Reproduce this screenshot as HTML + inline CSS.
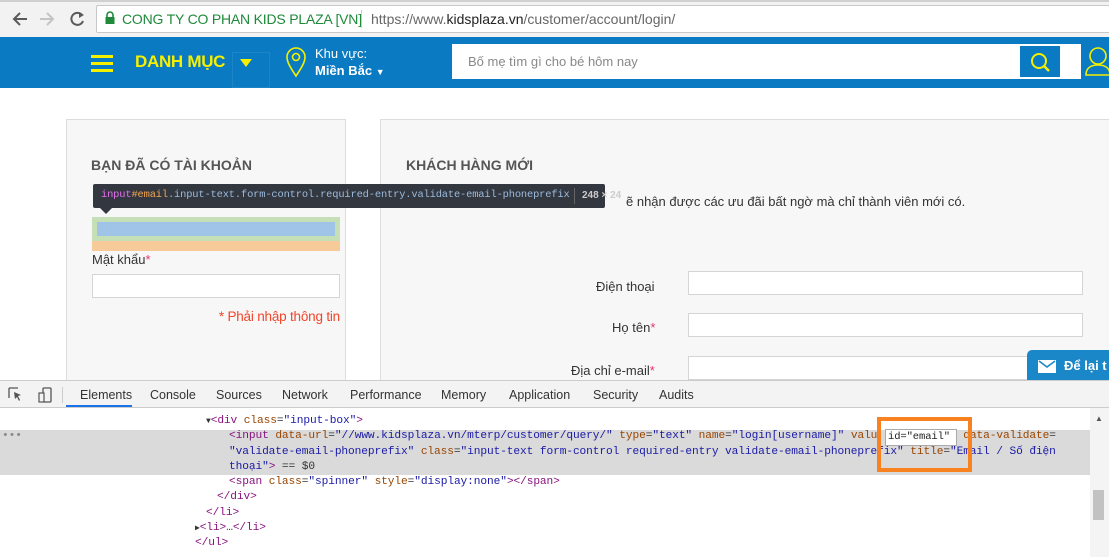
<!DOCTYPE html>
<html><head><meta charset="utf-8"><style>
*{margin:0;padding:0;box-sizing:border-box}
body{width:1109px;height:557px;overflow:hidden;position:relative;background:#fff;font-family:"Liberation Sans",Arial,sans-serif;font-size:13px;color:#333}
.a{position:absolute}
.mono{font-family:"Liberation Mono","DejaVu Sans Mono",monospace;font-size:11.2px;letter-spacing:-0.1px}
.code div{white-space:pre;height:15.3px}
.tg{color:#881280}.at{color:#994500}.av{color:#1a1aa6}
</style></head><body>
<!-- browser bar -->
<div class="a" style="left:0;top:0;width:1109px;height:37px;background:#f2f2f2;border-top:2px solid #d0d0d0"></div>
<svg class="a" style="left:10px;top:10px" width="80" height="18">
<path d="M17 9H4M10 3L4 9l6 6" stroke="#5a5a5a" stroke-width="2" fill="none"/>
<path d="M30 9h13M37 3l6 6-6 6" stroke="#c4c4c4" stroke-width="2" fill="none"/>
<path d="M72 5a6 6 0 1 0 1 6" stroke="#5a5a5a" stroke-width="2" fill="none"/><path d="M69 2l5 3-5 3z" fill="#5a5a5a"/>
</svg>
<div class="a" style="left:96px;top:5px;width:1020px;height:28px;background:#fff;border:1px solid #c8c8c8;border-radius:2px"></div>
<svg class="a" style="left:105px;top:11px" width="10" height="13"><path d="M2 6V4a3 3 0 0 1 6 0v2" stroke="#1e8a3a" stroke-width="1.6" fill="none"/><rect x="0.5" y="6" width="9" height="7" fill="#1e8a3a"/></svg>
<div class="a" style="left:122px;top:11px;font-size:14px;color:#1e8a3a;letter-spacing:-0.2px">CONG TY CO PHAN KIDS PLAZA [VN]</div>
<div class="a" style="left:361px;top:10px;width:1px;height:18px;background:#ccc"></div>
<div class="a" style="left:371px;top:11px;font-size:14px;color:#666">https://www.<span style="color:#222">kidsplaza.vn</span>/customer/account/login/</div>
<!-- blue header -->
<div class="a" style="left:0;top:37px;width:1109px;height:51px;background:#0a7ac2"></div>
<div class="a" style="left:91px;top:55px;width:22px;height:3px;background:#f5f000;box-shadow:0 7px 0 #f5f000,0 14px 0 #f5f000"></div>
<div class="a" style="left:135px;top:52px;font-size:17px;font-weight:bold;color:#f5f000;letter-spacing:-0.3px">DANH MỤC</div>
<div class="a" style="left:232px;top:52px;width:38px;height:36px;border:1px solid rgba(255,255,255,.08)"></div>
<svg class="a" style="left:240px;top:59px" width="12" height="8"><path d="M0 0h12L6 8z" fill="#f5f000"/></svg>
<svg class="a" style="left:285px;top:46px" width="22" height="32"><path d="M11 30C5 21 2 16 2 11a9 9 0 0 1 18 0c0 5-3 10-9 19z" stroke="#f5f000" stroke-width="1.6" fill="none"/><circle cx="11" cy="11" r="3.5" stroke="#f5f000" stroke-width="1.6" fill="none"/></svg>
<div class="a" style="left:315px;top:46px;font-size:13px;color:#fff">Khu vực:</div>
<div class="a" style="left:315px;top:63px;font-size:13px;font-weight:bold;color:#fff">Miền Bắc <span style="font-size:9px">▼</span></div>
<div class="a" style="left:452px;top:44px;width:629px;height:35px;background:#fff"></div>
<div class="a" style="left:468px;top:54px;font-size:13px;color:#888">Bố mẹ tìm gì cho bé hôm nay</div>
<div class="a" style="left:1020px;top:46px;width:40px;height:31px;background:#0a7ac2"></div>
<svg class="a" style="left:1029px;top:51px" width="24" height="22"><circle cx="10" cy="10" r="7" stroke="#f5f000" stroke-width="2" fill="none"/><path d="M15 15l5 5" stroke="#f5f000" stroke-width="2.5"/></svg>
<svg class="a" style="left:1085px;top:45px" width="24" height="32"><circle cx="13" cy="11" r="8" stroke="#f5f000" stroke-width="1.6" fill="none"/><path d="M1 30c0-7 5-10 12-10s12 3 12 10z" stroke="#f5f000" stroke-width="1.6" fill="none"/></svg>
<!-- page -->
<div class="a" style="left:66px;top:119px;width:280px;height:270px;background:#f7f7f7;border:1px solid #ddd"></div>
<div class="a" style="left:380px;top:119px;width:740px;height:270px;background:#f7f7f7;border:1px solid #ddd"></div>
<div class="a" style="left:91px;top:157px;font-size:14px;font-weight:bold;color:#555">BẠN ĐÃ CÓ TÀI KHOẢN</div>
<div class="a" style="left:406px;top:157px;font-size:14px;font-weight:bold;color:#555">KHÁCH HÀNG MỚI</div>
<div class="a" style="left:626px;top:194px;font-size:13px;color:#333">ẽ nhận được các ưu đãi bất ngờ mà chỉ thành viên mới có.</div>
<div class="a" style="left:92px;top:217px;width:248px;height:34px;background:#f6ca99"></div>
<div class="a" style="left:92px;top:217px;width:248px;height:24px;background:#c5dfb6"></div>
<div class="a" style="left:97px;top:222px;width:238px;height:14px;background:#9fc4e7"></div>
<div class="a" style="left:92px;top:252px;font-size:13px;color:#333">Mật khẩu<span style="color:#e8336d">*</span></div>
<div class="a" style="left:92px;top:274px;width:248px;height:24px;background:#fff;border:1px solid #d5d5d5"></div>
<div class="a" style="left:140px;width:200px;text-align:right;top:309px;font-size:13.5px;color:#f0462a;letter-spacing:-0.2px">* Phải nhập thông tin</div>
<div class="a" style="left:596px;top:279px;font-size:13px">Điện thoại</div>
<div class="a" style="left:612px;top:320px;font-size:13px">Họ tên<span style="color:#e8336d">*</span></div>
<div class="a" style="left:571px;top:363px;font-size:13px">Địa chỉ e-mail<span style="color:#e8336d">*</span></div>
<div class="a" style="left:688px;top:271px;width:395px;height:24px;background:#fff;border:1px solid #d5d5d5"></div>
<div class="a" style="left:688px;top:313px;width:395px;height:24px;background:#fff;border:1px solid #d5d5d5"></div>
<div class="a" style="left:688px;top:356px;width:395px;height:24px;background:#fff;border:1px solid #d5d5d5"></div>
<div class="a" style="left:1027px;top:350px;width:90px;height:32px;background:#1a87c9;border-radius:5px 0 0 0"></div>
<svg class="a" style="left:1038px;top:360px" width="18" height="13"><rect width="18" height="13" fill="#fff"/><path d="M1 1l8 6 8-6" stroke="#1a87c9" stroke-width="1.5" fill="none"/></svg>
<div class="a" style="left:1064px;top:358px;font-size:13px;font-weight:bold;color:#fff">Để lại t</div>
<!-- tooltip -->
<div class="a" style="left:93px;top:184px;width:512px;height:24px;background:#333740;border-radius:2px"></div>
<div class="a mono" style="left:101px;top:189px;font-size:10.4px;letter-spacing:-0.15px;white-space:pre;color:#9bbbdc"><span style="color:#e36eec">input</span><span style="color:#f2a650">#email</span>.input-text.form-control.required-entry.validate-email-phoneprefix</div>
<div class="a" style="left:574px;top:188px;width:1px;height:16px;background:#666"></div>
<div class="a" style="left:582px;top:190px;font-size:10px;color:#ccc;font-weight:bold">248 × 24</div>
<div class="a" style="left:100px;top:208px;border:6px solid transparent;border-top-color:#333740"></div>
<!-- devtools -->
<div class="a" style="left:0;top:380px;width:1109px;height:28px;background:#f3f3f3;border-top:1px solid #ccc;border-bottom:1px solid #ccc"></div>
<svg class="a" style="left:8px;top:387px" width="44" height="16"><path d="M1 1h9M1 1v10" stroke="#555" stroke-width="1.3"/><path d="M6 5l7 3-3 1 2 4-1 1-2-4-2 2z" fill="#555"/><rect x="35" y="1" width="8" height="14" rx="1" stroke="#555" fill="none" stroke-width="1.3"/><rect x="31" y="6" width="5" height="9" stroke="#555" fill="#f3f3f3" stroke-width="1.2"/></svg>
<div class="a" style="left:62px;top:387px;width:1px;height:16px;background:#ccc"></div>
<div class="a" style="left:0;top:388px;font-size:12.5px;color:#333;white-space:pre"><span style="position:absolute;left:80px">Elements</span><span style="position:absolute;left:150px">Console</span><span style="position:absolute;left:216px">Sources</span><span style="position:absolute;left:282px">Network</span><span style="position:absolute;left:350px">Performance</span><span style="position:absolute;left:441px">Memory</span><span style="position:absolute;left:509px">Application</span><span style="position:absolute;left:593px">Security</span><span style="position:absolute;left:659px">Audits</span></div>
<div class="a" style="left:66px;top:405px;width:66px;height:2px;background:#1a73e8"></div>
<div class="a" style="left:0;top:430px;width:1090px;height:45px;background:#dadada"></div>
<div class="a" style="left:1090px;top:408px;width:19px;height:149px;background:#f4f4f4"></div>
<div class="a" style="left:1093px;top:490px;width:11px;height:30px;background:#c2c2c2"></div>
<div class="a" style="left:1095px;top:414px;font-size:8px;color:#555">▲</div>
<div class="a mono code" style="left:0;top:414px;width:1090px;overflow:hidden;line-height:15.3px;color:#333">
<div style="padding-left:206px"><span style="font-size:8px">▼</span><span class="tg">&lt;div</span> <span class="at">class</span>=<span class="av">"input-box"</span><span class="tg">&gt;</span></div>
<div style="padding-left:229px;position:relative"><span style="position:absolute;left:2px;color:#888">•••</span><span class="tg">&lt;input</span> <span class="at">data-url</span>=<span class="av">"//www.kidsplaza.vn/mterp/customer/query/"</span> <span class="at">type</span>=<span class="av">"text"</span> <span class="at">name</span>=<span class="av">"login[username]"</span> <span class="at">valu</span>             <span class="at">data-validate</span>=</div>
<div style="padding-left:229px"><span class="av">"validate-email-phoneprefix"</span> <span class="at">class</span>=<span class="av">"input-text form-control required-entry validate-email-phoneprefix"</span> <span class="at">title</span>=<span class="av">"Email / Số điện</span></div>
<div style="padding-left:229px"><span class="av">thoại"</span><span class="tg">&gt;</span> == $0</div>
<div style="padding-left:229px"><span class="tg">&lt;span</span> <span class="at">class</span>=<span class="av">"spinner"</span> <span class="at">style</span>=<span class="av">"display:none"</span><span class="tg">&gt;&lt;/span&gt;</span></div>
<div style="padding-left:217px"><span class="tg">&lt;/div&gt;</span></div>
<div style="padding-left:206px"><span class="tg">&lt;/li&gt;</span></div>
<div style="padding-left:195px"><span style="font-size:8px">▶</span><span class="tg">&lt;li&gt;</span>…<span class="tg">&lt;/li&gt;</span></div>
<div style="padding-left:195px"><span class="tg">&lt;/ul&gt;</span></div>
</div>
<div class="a mono" style="left:885px;top:429px;width:72px;height:17px;background:#fff;border:1px solid #aaa;padding:1px 2px;color:#222;white-space:pre;font-size:10.5px">id="email"</div>
<div class="a" style="left:877px;top:417px;width:95px;height:55px;border:4px solid #f7821f"></div>
</body></html>
